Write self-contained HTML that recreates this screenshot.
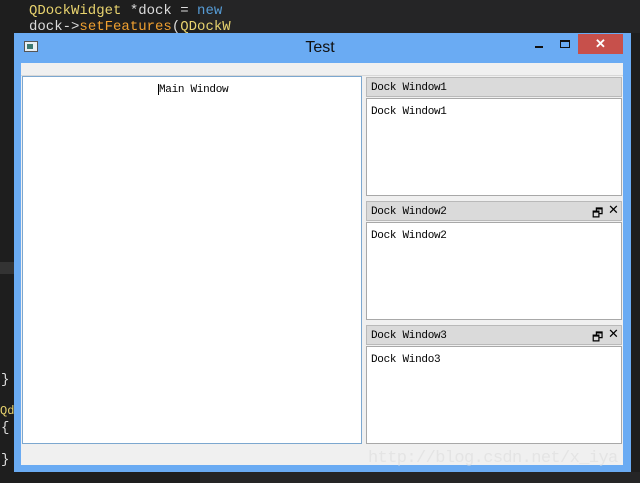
<!DOCTYPE html>
<html><head><style>
body{margin:0;width:640px;height:483px;background:#1e1e1e;position:relative;overflow:hidden;font-family:"Liberation Mono","Noto Sans CJK SC",monospace}
.a{position:absolute}
.code{font-size:14px;white-space:pre;color:#dcdcdc}
.t{font-family:"Liberation Mono",monospace;font-size:11px;color:#000;letter-spacing:-0.3px}
.dt{background:#dadada;border:1px solid #b9b9b9;box-sizing:border-box}
.dc{background:#fff;border:1px solid #a8a8a8;box-sizing:border-box}
</style></head><body>
<div class="a" style="left:200px;top:0;width:440px;height:33px;background:#252526"></div>
<div class="a" style="left:200px;top:472px;width:440px;height:11px;background:#252526"></div>
<div class="a code" style="left:29px;top:3px"><span style="color:#e8d36e">QDockWidget</span> *dock = <span style="color:#569cd6">new</span></div>
<div class="a code" style="left:29px;top:19px">dock-&gt;<span style="color:#f0a030">setFeatures</span>(<span style="color:#e8d36e">QDockW</span></div>
<div class="a code" style="left:1px;top:372px">}</div>
<div class="a code" style="left:0px;top:404px;color:#e8d36e;font-size:12px">Qd</div>
<div class="a code" style="left:1px;top:420px">{</div>
<div class="a code" style="left:1px;top:452px">}</div>
<div class="a" style="left:0;top:262px;width:14px;height:12px;background:#333"></div>
<div class="a" style="left:14px;top:33px;width:617px;height:439px;background:#6aabf3"></div>
<div class="a" style="left:24px;top:41px;width:14px;height:11px;background:#e8eef2;border:1px solid #555;box-sizing:border-box"><div style="margin:2px;width:6px;height:5px;background:#3c7a72"></div></div>
<div class="a" style="left:0;width:640px;top:39px;text-align:center;font-family:'Liberation Sans',sans-serif;font-size:16px;color:#111">Test</div>
<div class="a" style="left:535px;top:46px;width:8px;height:2px;background:#111"></div>
<div class="a" style="left:560px;top:40px;width:10px;height:8px;border:1px solid #111;border-top-width:2px;box-sizing:border-box"></div>
<div class="a" style="left:578px;top:34px;width:45px;height:20px;background:#c7504b;color:#fff;text-align:center;font:bold 13px 'Liberation Sans',sans-serif;line-height:20px">✕</div>
<div class="a" style="left:21px;top:63px;width:602px;height:402px;background:#f0f0f0"></div>
<div class="a" style="left:21px;top:75px;width:602px;height:1px;background:#d8d8d8"></div>
<div class="a" style="left:22px;top:76px;width:340px;height:368px;background:#fff;border:1px solid #7ca7cf;box-sizing:border-box"></div>
<div class="a" style="left:158px;top:84px;width:1px;height:11px;background:#000"></div>
<div class="a t" style="left:159px;top:84px">Main Window</div>
<div class="a dt" style="left:366px;top:77px;width:256px;height:20px"><span class="a t" style="left:4px;top:4px">Dock Window1</span></div>
<div class="a dc" style="left:366px;top:98px;width:256px;height:98px"><span class="a t" style="left:4px;top:7px">Dock Window1</span></div>
<div class="a dt" style="left:366px;top:201px;width:256px;height:20px"><span class="a t" style="left:4px;top:4px">Dock Window2</span><span class="a" style="left:225px;top:2px;font:12px 'DejaVu Sans',sans-serif">🗗</span><span class="a" style="left:241px;top:1px;font:13px 'DejaVu Sans',sans-serif">✕</span></div>
<div class="a dc" style="left:366px;top:222px;width:256px;height:98px"><span class="a t" style="left:4px;top:7px">Dock Window2</span></div>
<div class="a dt" style="left:366px;top:325px;width:256px;height:20px"><span class="a t" style="left:4px;top:4px">Dock Window3</span><span class="a" style="left:225px;top:2px;font:12px 'DejaVu Sans',sans-serif">🗗</span><span class="a" style="left:241px;top:1px;font:13px 'DejaVu Sans',sans-serif">✕</span></div>
<div class="a dc" style="left:366px;top:346px;width:256px;height:98px"><span class="a t" style="left:4px;top:7px">Dock Windo3</span></div>
<div class="a" style="left:368px;top:449px;font:17px 'Liberation Mono',monospace;color:#e4e4e4;letter-spacing:-0.6px">http://blog.csdn.net/x_iya</div>
</body></html>
